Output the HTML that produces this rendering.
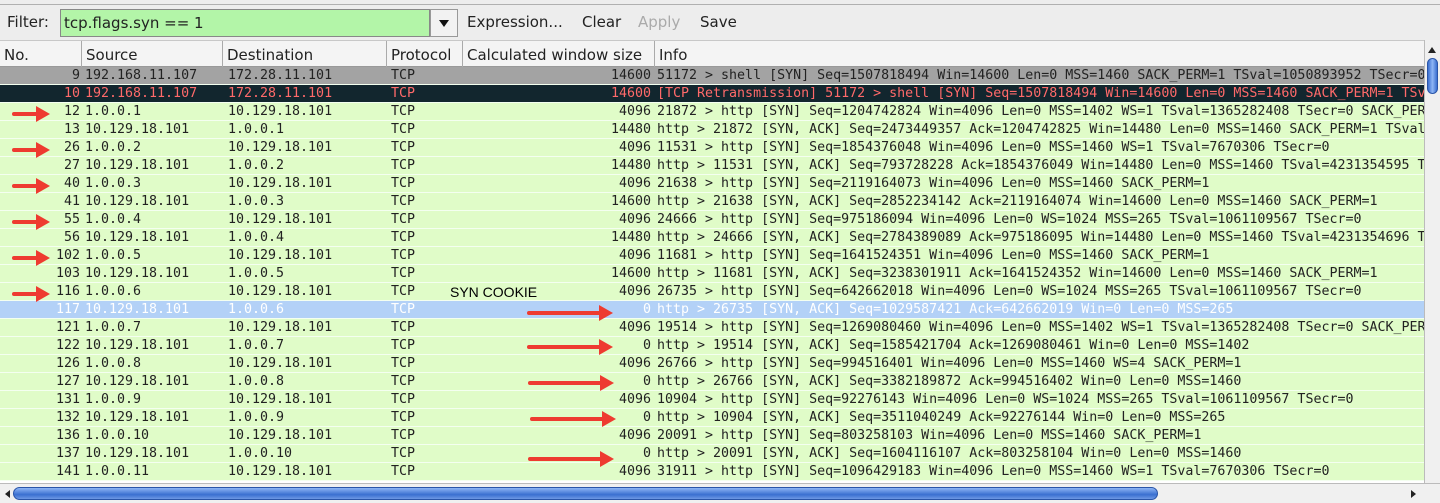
<!DOCTYPE html>
<html><head><meta charset="utf-8"><style>
*{margin:0;padding:0;box-sizing:border-box}
body{width:1440px;height:503px;overflow:hidden;background:#ededed;font-family:"DejaVu Sans","Liberation Sans",sans-serif;position:relative}
.top{position:absolute;left:0;top:0;width:1440px;height:5px;border-bottom:1px solid #b0b0b0;background:#ededed}
.fbar{position:absolute;top:6px;left:0;width:1440px;height:33px;font-size:15px;color:#222}
.fbar span{position:absolute;top:7px}
.fin{position:absolute;left:60px;top:3px;width:370px;height:28px;background:#b3f5a8;border:1px solid #888;font-size:15px;padding:4px 0 0 3px;font-family:"DejaVu Sans",sans-serif}
.dd{position:absolute;left:430px;top:3px;width:28px;height:28px;background:#f2f2f2;border:1px solid #999}
.hdr{position:absolute;top:40px;left:0;width:1424px;height:27px;background:#f4f4f4;border-top:1px solid #c8c8c8;border-bottom:1px solid #999;font-size:15px;color:#222}
.hdr div{position:absolute;top:0;height:26px;padding:5px 0 0 4px;border-right:1px solid #aaa;white-space:nowrap;overflow:hidden}
.rows{position:absolute;top:67px;left:0;width:1424px;height:416px;overflow:hidden;background:#fff}
.r{position:relative;height:18px;border-bottom:1px solid #f4fff0;background:#e0fcc8;color:#222;font-family:"DejaVu Sans Mono","Liberation Mono",monospace;font-size:13.3px;white-space:nowrap}
.r span{position:absolute;top:1px}
.a{right:1344px}.b{left:85px}.c{left:228px}.d{left:391px}.e{right:773px}.f{left:657px}
.g{background:#a3a3a3}
.k{background:#12262e;color:#ff6a6a}
.s{background:#b3d1f7;color:#fff}
.ar{position:absolute;height:4px;background:#ee3b30;border-radius:2px}
.ar:after{content:"";position:absolute;right:-12px;top:-6px;border-left:14px solid #ee3b30;border-top:8px solid transparent;border-bottom:8px solid transparent}
.vs{position:absolute;left:1424px;top:40px;width:16px;height:443px;background:#f0f0f0;border-left:1px solid #bbb}
.hs{position:absolute;left:0;top:483px;width:1440px;height:20px;background:#f0f0f0;border-top:1px solid #bbb}
</style></head><body>
<div class="top"></div>
<div class="fbar"><span style="left:7px">Filter:</span><div class="fin">tcp.flags.syn == 1</div><div class="dd"><div style="position:absolute;left:8px;top:10px;border-top:7px solid #111;border-left:5px solid transparent;border-right:5px solid transparent"></div></div>
<span style="left:467px">Expression...</span><span style="left:582px">Clear</span><span style="left:638px;color:#aaa">Apply</span><span style="left:700px">Save</span></div>
<div class="hdr"><div style="left:0;width:82px">No.</div><div style="left:82px;width:141px">Source</div><div style="left:223px;width:164px">Destination</div><div style="left:387px;width:76px">Protocol</div><div style="left:463px;width:192px">Calculated window size</div><div style="left:655px;width:769px;border-right:none">Info</div></div>
<div class="rows">
<div class="r g"><span class="a">9</span><span class="b">192.168.11.107</span><span class="c">172.28.11.101</span><span class="d">TCP</span><span class="e">14600</span><span class="f">51172 &gt; shell [SYN] Seq=1507818494 Win=14600 Len=0 MSS=1460 SACK_PERM=1 TSval=1050893952 TSecr=0</span></div>
<div class="r k"><span class="a">10</span><span class="b">192.168.11.107</span><span class="c">172.28.11.101</span><span class="d">TCP</span><span class="e">14600</span><span class="f">[TCP Retransmission] 51172 &gt; shell [SYN] Seq=1507818494 Win=14600 Len=0 MSS=1460 SACK_PERM=1 TSval</span></div>
<div class="r"><span class="a">12</span><span class="b">1.0.0.1</span><span class="c">10.129.18.101</span><span class="d">TCP</span><span class="e">4096</span><span class="f">21872 &gt; http [SYN] Seq=1204742824 Win=4096 Len=0 MSS=1402 WS=1 TSval=1365282408 TSecr=0 SACK_PERM=1</span></div>
<div class="r"><span class="a">13</span><span class="b">10.129.18.101</span><span class="c">1.0.0.1</span><span class="d">TCP</span><span class="e">14480</span><span class="f">http &gt; 21872 [SYN, ACK] Seq=2473449357 Ack=1204742825 Win=14480 Len=0 MSS=1460 SACK_PERM=1 TSval=</span></div>
<div class="r"><span class="a">26</span><span class="b">1.0.0.2</span><span class="c">10.129.18.101</span><span class="d">TCP</span><span class="e">4096</span><span class="f">11531 &gt; http [SYN] Seq=1854376048 Win=4096 Len=0 MSS=1460 WS=1 TSval=7670306 TSecr=0</span></div>
<div class="r"><span class="a">27</span><span class="b">10.129.18.101</span><span class="c">1.0.0.2</span><span class="d">TCP</span><span class="e">14480</span><span class="f">http &gt; 11531 [SYN, ACK] Seq=793728228 Ack=1854376049 Win=14480 Len=0 MSS=1460 TSval=4231354595 TSecr=</span></div>
<div class="r"><span class="a">40</span><span class="b">1.0.0.3</span><span class="c">10.129.18.101</span><span class="d">TCP</span><span class="e">4096</span><span class="f">21638 &gt; http [SYN] Seq=2119164073 Win=4096 Len=0 MSS=1460 SACK_PERM=1</span></div>
<div class="r"><span class="a">41</span><span class="b">10.129.18.101</span><span class="c">1.0.0.3</span><span class="d">TCP</span><span class="e">14600</span><span class="f">http &gt; 21638 [SYN, ACK] Seq=2852234142 Ack=2119164074 Win=14600 Len=0 MSS=1460 SACK_PERM=1</span></div>
<div class="r"><span class="a">55</span><span class="b">1.0.0.4</span><span class="c">10.129.18.101</span><span class="d">TCP</span><span class="e">4096</span><span class="f">24666 &gt; http [SYN] Seq=975186094 Win=4096 Len=0 WS=1024 MSS=265 TSval=1061109567 TSecr=0</span></div>
<div class="r"><span class="a">56</span><span class="b">10.129.18.101</span><span class="c">1.0.0.4</span><span class="d">TCP</span><span class="e">14480</span><span class="f">http &gt; 24666 [SYN, ACK] Seq=2784389089 Ack=975186095 Win=14480 Len=0 MSS=1460 TSval=4231354696 TSec</span></div>
<div class="r"><span class="a">102</span><span class="b">1.0.0.5</span><span class="c">10.129.18.101</span><span class="d">TCP</span><span class="e">4096</span><span class="f">11681 &gt; http [SYN] Seq=1641524351 Win=4096 Len=0 MSS=1460 SACK_PERM=1</span></div>
<div class="r"><span class="a">103</span><span class="b">10.129.18.101</span><span class="c">1.0.0.5</span><span class="d">TCP</span><span class="e">14600</span><span class="f">http &gt; 11681 [SYN, ACK] Seq=3238301911 Ack=1641524352 Win=14600 Len=0 MSS=1460 SACK_PERM=1</span></div>
<div class="r"><span class="a">116</span><span class="b">1.0.0.6</span><span class="c">10.129.18.101</span><span class="d">TCP</span><span style="left:450px;font-family:'Liberation Sans',sans-serif;font-size:14px;color:#000">SYN COOKIE</span><span class="e">4096</span><span class="f">26735 &gt; http [SYN] Seq=642662018 Win=4096 Len=0 WS=1024 MSS=265 TSval=1061109567 TSecr=0</span></div>
<div class="r s"><span class="a">117</span><span class="b">10.129.18.101</span><span class="c">1.0.0.6</span><span class="d">TCP</span><span class="e">0</span><span class="f">http &gt; 26735 [SYN, ACK] Seq=1029587421 Ack=642662019 Win=0 Len=0 MSS=265</span></div>
<div class="r"><span class="a">121</span><span class="b">1.0.0.7</span><span class="c">10.129.18.101</span><span class="d">TCP</span><span class="e">4096</span><span class="f">19514 &gt; http [SYN] Seq=1269080460 Win=4096 Len=0 MSS=1402 WS=1 TSval=1365282408 TSecr=0 SACK_PERM=1</span></div>
<div class="r"><span class="a">122</span><span class="b">10.129.18.101</span><span class="c">1.0.0.7</span><span class="d">TCP</span><span class="e">0</span><span class="f">http &gt; 19514 [SYN, ACK] Seq=1585421704 Ack=1269080461 Win=0 Len=0 MSS=1402</span></div>
<div class="r"><span class="a">126</span><span class="b">1.0.0.8</span><span class="c">10.129.18.101</span><span class="d">TCP</span><span class="e">4096</span><span class="f">26766 &gt; http [SYN] Seq=994516401 Win=4096 Len=0 MSS=1460 WS=4 SACK_PERM=1</span></div>
<div class="r"><span class="a">127</span><span class="b">10.129.18.101</span><span class="c">1.0.0.8</span><span class="d">TCP</span><span class="e">0</span><span class="f">http &gt; 26766 [SYN, ACK] Seq=3382189872 Ack=994516402 Win=0 Len=0 MSS=1460</span></div>
<div class="r"><span class="a">131</span><span class="b">1.0.0.9</span><span class="c">10.129.18.101</span><span class="d">TCP</span><span class="e">4096</span><span class="f">10904 &gt; http [SYN] Seq=92276143 Win=4096 Len=0 WS=1024 MSS=265 TSval=1061109567 TSecr=0</span></div>
<div class="r"><span class="a">132</span><span class="b">10.129.18.101</span><span class="c">1.0.0.9</span><span class="d">TCP</span><span class="e">0</span><span class="f">http &gt; 10904 [SYN, ACK] Seq=3511040249 Ack=92276144 Win=0 Len=0 MSS=265</span></div>
<div class="r"><span class="a">136</span><span class="b">1.0.0.10</span><span class="c">10.129.18.101</span><span class="d">TCP</span><span class="e">4096</span><span class="f">20091 &gt; http [SYN] Seq=803258103 Win=4096 Len=0 MSS=1460 SACK_PERM=1</span></div>
<div class="r"><span class="a">137</span><span class="b">10.129.18.101</span><span class="c">1.0.0.10</span><span class="d">TCP</span><span class="e">0</span><span class="f">http &gt; 20091 [SYN, ACK] Seq=1604116107 Ack=803258104 Win=0 Len=0 MSS=1460</span></div>
<div class="r"><span class="a">141</span><span class="b">1.0.0.11</span><span class="c">10.129.18.101</span><span class="d">TCP</span><span class="e">4096</span><span class="f">31911 &gt; http [SYN] Seq=1096429183 Win=4096 Len=0 MSS=1460 WS=1 TSval=7670306 TSecr=0</span></div>
</div>
<div class="ar" style="left:12px;top:112px;width:26px"></div>
<div class="ar" style="left:12px;top:148px;width:26px"></div>
<div class="ar" style="left:12px;top:184px;width:26px"></div>
<div class="ar" style="left:12px;top:220px;width:26px"></div>
<div class="ar" style="left:12px;top:256px;width:26px"></div>
<div class="ar" style="left:12px;top:292px;width:26px"></div>
<div class="ar" style="left:527px;top:311px;width:74px"></div>
<div class="ar" style="left:527px;top:345px;width:74px"></div>
<div class="ar" style="left:528px;top:381px;width:74px"></div>
<div class="ar" style="left:530px;top:417px;width:74px"></div>
<div class="ar" style="left:528px;top:457px;width:74px"></div>
<div class="vs"><div style="position:absolute;left:3px;top:7px;border-bottom:6px solid #222;border-left:4px solid transparent;border-right:4px solid transparent"></div><div style="position:absolute;left:2px;top:18px;width:11px;height:36px;border-radius:6px;background:linear-gradient(90deg,#3a6fd0,#8fb6f5,#3a6fd0);border:1px solid #2a55a8"></div></div>
<div class="hs"><div style="position:absolute;left:5px;top:6px;border-right:5px solid #222;border-top:4px solid transparent;border-bottom:4px solid transparent"></div><div style="position:absolute;left:13px;top:3px;width:1145px;height:13px;border-radius:7px;background:linear-gradient(180deg,#8fb6f5,#3a6fd0 60%,#6e98e4);border:1px solid #2a55a8"></div><div style="position:absolute;left:1411px;top:6px;border-left:5px solid #222;border-top:4px solid transparent;border-bottom:4px solid transparent"></div></div>
</body></html>
